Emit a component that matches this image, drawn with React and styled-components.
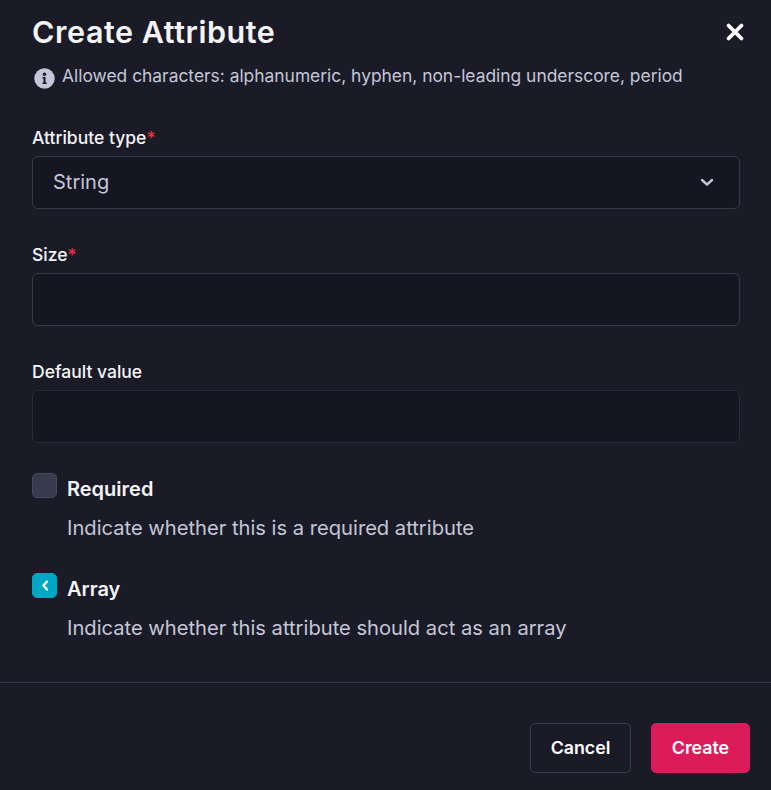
import React from "react";
import styled, { createGlobalStyle } from "styled-components";

const GlobalStyle = createGlobalStyle`
  html, body {
    margin: 0;
    background: #1b1b28;
  }
  * {
    box-sizing: border-box;
  }
`;

const Modal = styled.div`
  width: 771px;
  height: 790px;
  overflow: hidden;
  background: #1b1b28;
  font-family: Inter, "Liberation Sans", sans-serif;
  color: #ffffff;
`;

const Content = styled.div`
  height: 683px;
  padding: 0 31px 0 32px;
  border-bottom: 1px solid #383846;
`;

const Header = styled.div`
  display: flex;
  justify-content: space-between;
  align-items: center;
  height: 64px;
`;

const Title = styled.h1`
  margin: 0;
  font-family: Inter, sans-serif;
  font-size: 30.5px;
  font-weight: 600;
  letter-spacing: 0.55px;
  line-height: 64px;
  color: #f4f4f7;
`;

const CloseButton = styled.button`
  display: flex;
  padding: 0;
  margin-right: -7px;
  border: none;
  background: none;
  cursor: pointer;
`;

const Hint = styled.div`
  display: flex;
  align-items: center;
  gap: 7px;
  height: 22px;
  font-size: 17.4px;
  color: #c4c6d7;
`;

const HintIcon = styled.svg`
  flex: none;
  width: 21px;
  height: 21px;
  margin: 7px 0 0 2px;
`;

const FieldList = styled.div`
  display: flex;
  flex-direction: column;
  gap: 34px;
  margin-top: 40px;
`;

const Field = styled.div`
  display: flex;
  flex-direction: column;
  gap: 8px;
`;

const Label = styled.label`
  font-size: 17.5px;
  font-weight: 500;
  line-height: 24px;
  height: 22px;
  color: #f4f4f7;
`;

const Star = styled.span`
  color: #f02e3e;
`;

const Input = styled.input`
  width: 100%;
  height: 53px;
  padding: 0 20px;
  border: 1px solid ${(p) => (p.$muted ? "#2a2a38" : "#383846")};
  border-radius: 6px;
  outline: none;
  background: #161622;
  color: #c4c6d7;
  font: inherit;
`;

const SelectBox = styled.div`
  display: flex;
  align-items: center;
  justify-content: space-between;
  height: 53px;
  padding: 0 24px 2px 20px;
  border: 1px solid #383846;
  border-radius: 6px;
  background: #161622;
  font-size: 20px;
  color: #c4c6d7;
`;

const OptionList = styled.div`
  display: flex;
  flex-direction: column;
  gap: 31px;
  margin-top: 30px;
`;

const Option = styled.div`
  display: grid;
  grid-template-columns: 25px 1fr;
  column-gap: 10px;
  row-gap: 9px;
`;

const Checkbox = styled.div`
  display: flex;
  align-items: center;
  justify-content: center;
  width: 25px;
  height: 25px;
  border-radius: 5px;
  border: 1px solid ${(p) => (p.$checked ? "#00a7c4" : "#454b5e")};
  background: ${(p) => (p.$checked ? "#00a7c4" : "#373b4d")};
`;

const OptionName = styled.div`
  font-size: 20px;
  font-weight: 600;
  line-height: 32px;
  color: #f4f4f7;
`;

const OptionText = styled.div`
  grid-column: 2;
  font-size: 20.15px;
  line-height: 28px;
  color: #c4c6d7;
`;

const Footer = styled.div`
  display: flex;
  justify-content: flex-end;
  gap: 20px;
  padding: 40px 21px 0 0;
`;

const Button = styled.button`
  height: 50px;
  padding: 0 0 2px;
  width: ${(p) => (p.$primary ? "99px" : "101px")};
  border: 1px solid ${(p) => (p.$primary ? "#dc1c5a" : "#383846")};
  border-radius: 5px;
  background: ${(p) => (p.$primary ? "#dc1c5a" : "transparent")};
  color: #ffffff;
  font-family: inherit;
  font-size: 17.8px;
  font-weight: 600;
  cursor: pointer;
`;

export default function App() {
  return (
    <Modal>
      <GlobalStyle />
      <Content>
        <Header>
          <Title>Create Attribute</Title>
          <CloseButton aria-label="Close">
            <svg width="24" height="24" viewBox="0 0 24 24" fill="none">
              <path d="M5.500 5.500l13 13M18.500 5.500l-13 13" stroke="#fff" strokeWidth="3.800" strokeLinecap="round" />
            </svg>
          </CloseButton>
        </Header>
        <Hint>
          <HintIcon viewBox="0 0 21 21">
            <circle cx="10.500" cy="10.500" r="10.200" fill="#c4c6d7" />
            <circle cx="10.500" cy="6.200" r="1.700" fill="#1b1b28" />
            <path d="M8.500 9h3v5.500h1.200V16H8.500v-1.500h1V10.500h-1z" fill="#1b1b28" />
          </HintIcon>
          Allowed characters: alphanumeric, hyphen, non-leading underscore, period
        </Hint>
        <FieldList>
          <Field>
            <Label>
              Attribute type<Star>*</Star>
            </Label>
            <SelectBox>
              String
              <svg width="16" height="16" viewBox="0 0 16 16" fill="none">
                <path d="M3 6l5 4.500L13 6" stroke="#c4c6d7" strokeWidth="2.400" strokeLinecap="round" strokeLinejoin="round" />
              </svg>
            </SelectBox>
          </Field>
          <Field>
            <Label>
              Size<Star>*</Star>
            </Label>
            <Input />
          </Field>
          <Field>
            <Label>Default value</Label>
            <Input $muted />
          </Field>
        </FieldList>
        <OptionList>
          <Option>
            <Checkbox />
            <OptionName>Required</OptionName>
            <OptionText>Indicate whether this is a required attribute</OptionText>
          </Option>
          <Option>
            <Checkbox $checked>
              <svg width="13" height="13" viewBox="0 0 13 13" fill="none">
                <path d="M9 2.500L5.500 6.500 9 10.500" stroke="#fff" strokeWidth="2.400" strokeLinecap="round" strokeLinejoin="round" />
              </svg>
            </Checkbox>
            <OptionName>Array</OptionName>
            <OptionText>Indicate whether this attribute should act as an array</OptionText>
          </Option>
        </OptionList>
      </Content>
      <Footer>
        <Button>Cancel</Button>
        <Button $primary>Create</Button>
      </Footer>
    </Modal>
  );
}
